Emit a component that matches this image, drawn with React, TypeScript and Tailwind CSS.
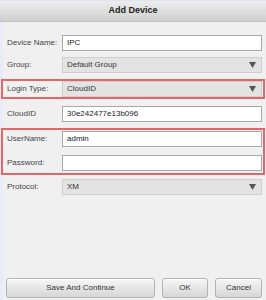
import React from 'react';

const font = { fontFamily: '"Liberation Sans", Arial, sans-serif' };

const Arrow = () => (
    <svg width="7" height="6" viewBox="0 0 7 6" className="shrink-0">
        <polygon points="0,0 7,0 3.5,6" fill="#555" />
    </svg>
);

const Field = ({ value, select }: { value: string; select?: boolean }) =>
    select ? (
        <div className="w-[200px] h-[16px] flex items-center justify-between pl-[4px] pr-[5px] bg-[#e3e3e3] border border-[#cfcfcf] text-[8px] text-[#333]">
            <span>{value}</span>
            <Arrow />
        </div>
    ) : (
        <div className="w-[200px] h-[16px] flex items-center pl-[4px] bg-white border border-[#a9a9a9] text-[8px] text-[#222]">
            {value}
        </div>
    );

const Row = ({ label, value, select, inBox }: { label: string; value: string; select?: boolean; inBox?: boolean }) => (
    <div className={`flex items-center ${inBox ? 'pl-[4px]' : 'pl-[7px]'}`}>
        <span className={`${inBox ? 'w-[55px]' : 'w-[55px]'} shrink-0 text-[8px] text-[#444]`}>{label}</span>
        <Field value={value} select={select} />
    </div>
);

const Button = ({ label, width }: { label: string; width: string }) => (
    <button
        className={`${width} h-[20px] rounded-[3px] border border-[#b3b3b3] bg-gradient-to-b from-[#f7f7f7] to-[#d6d6d6] text-[8px] text-[#333] shadow-[inset_0_1px_0_#fff]`}
    >
        {label}
    </button>
);

export default function App() {
    return (
        <div style={font} className="w-[266px] h-[300px] flex flex-col bg-[#f0f0f0] overflow-hidden">
            <div className="h-[22px] shrink-0 flex items-center justify-center border-t border-[#dfe3f3] border-b border-b-[#c4c4c4] bg-gradient-to-b from-[#ededed] to-[#d0d0d0]">
                <span className="text-[9px] font-bold text-[#222]">Add Device</span>
            </div>

            <div className="flex-1 flex flex-col border-l-[3px] border-[#e9ecf7] -ml-[0px]">
                <div className="mt-[13px] -ml-[3px]">
                    <Row label="Device Name:" value="IPC" />
                </div>
                <div className="mt-[6px] -ml-[3px]">
                    <Row label="Group:" value="Default Group" select />
                </div>
                <div className="mt-[6px] ml-[-2px] w-[264px] border-2 border-[#e26868] py-[0px]">
                    <Row label="Login Type:" value="CloudID" select inBox />
                </div>
                <div className="mt-[7px] -ml-[3px]">
                    <Row label="CloudID" value="30e242477e13b096" />
                </div>
                <div className="mt-[6px] ml-[-2px] w-[264px] border-2 border-[#e26868] pt-[1px] pb-[2px] flex flex-col gap-[8px]">
                    <Row label="UserName:" value="admin" inBox />
                    <Row label="Password:" value="" inBox />
                </div>
                <div className="mt-[4px] -ml-[3px]">
                    <Row label="Protocol:" value="XM" select />
                </div>

                <div className="mt-auto mb-[2px] -ml-[3px] flex gap-[7px] pl-[6px]">
                    <Button label="Save And Continue" width="w-[149px]" />
                    <Button label="OK" width="w-[46px]" />
                    <Button label="Cancel" width="w-[47px]" />
                </div>
            </div>
        </div>
    );
}
